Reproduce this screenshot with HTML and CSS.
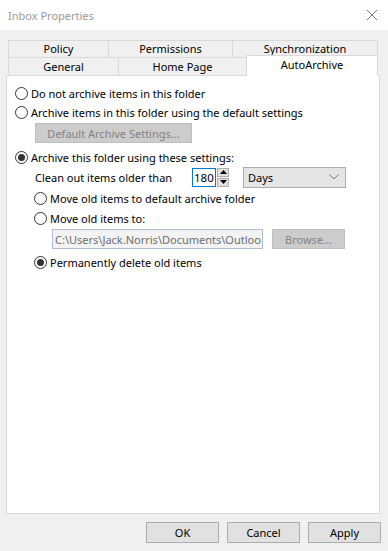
FILE: index.html
```html
<!DOCTYPE html>
<html>
<head>
<meta charset="utf-8">
<link rel="stylesheet" href="styles.css">
</head>
<body>
<div class="window">
  <div class="titlebar">
    <span class="title">Inbox Properties</span>
    <svg class="close" width="12" height="12" viewBox="0 0 12 12"><path d="M1 1 L11 11 M11 1 L1 11" stroke="#7a7a7a" stroke-width="1" fill="none"/></svg>
  </div>
  <div class="client">
    <div class="tabs">
      <div class="tabrow">
        <div class="tab w-policy">Policy</div>
        <div class="tab w-perm">Permissions</div>
        <div class="tab w-sync last">Synchronization</div>
      </div>
      <div class="tabrow">
        <div class="tab low w-general">General</div>
        <div class="tab low w-home">Home Page</div>
        <div class="tab low w-auto last selected">AutoArchive</div>
      </div>
    </div>
    <div class="panel">
      <div class="row r1"><span class="radio"></span><span>Do not archive items in this folder</span></div>
      <div class="row r2"><span class="radio"></span><span>Archive items in this folder using the default settings</span></div>
      <div class="btnrow"><div class="btn disabled wide">Default Archive Settings...</div></div>
      <div class="row r3"><span class="radio on"></span><span>Archive this folder using these settings:</span></div>
      <div class="cleanrow">
        <span class="cleanlabel">Clean out items older than</span>
        <div class="spin">
          <div class="spininput">180</div>
          <div class="spinbtns">
            <div class="spinbtn"><svg width="7" height="4" viewBox="0 0 7 4"><path d="M0 4 L3.5 0 L7 4 Z" fill="#000"/></svg></div>
            <div class="spinbtn"><svg width="7" height="4" viewBox="0 0 7 4"><path d="M0 0 L3.5 4 L7 0 Z" fill="#000"/></svg></div>
          </div>
        </div>
        <div class="select"><span>Days</span><svg width="10" height="6" viewBox="0 0 10 6"><path d="M0.5 0.5 L5 5 L9.5 0.5" stroke="#777" stroke-width="1" fill="none"/></svg></div>
      </div>
      <div class="row sub r4"><span class="radio"></span><span>Move old items to default archive folder</span></div>
      <div class="row sub r5"><span class="radio"></span><span>Move old items to:</span></div>
      <div class="pathrow">
        <div class="pathinput"><span>C:\Users\Jack.Norris\Documents\Outloo</span></div>
        <div class="btn disabled browse">Browse...</div>
      </div>
      <div class="row sub r6"><span class="radio on"></span><span>Permanently delete old items</span></div>
    </div>
    <div class="footer">
      <div class="btn">OK</div>
      <div class="btn">Cancel</div>
      <div class="btn">Apply</div>
    </div>
  </div>
</div>
</body>
</html>
```
FILE: styles.css
```css
* { box-sizing: border-box; }
html, body { margin: 0; padding: 0; }
body {
  width: 388px;
  height: 551px;
  background: #f0f0f0;
  font-family: "Noto Sans", "Open Sans", sans-serif;
  font-size: 11px;
  color: #000;
  overflow: hidden;
}
.window { width: 388px; height: 551px; display: flex; flex-direction: column; }
.titlebar {
  height: 30px;
  background: #fff;
  display: flex;
  align-items: center;
  justify-content: space-between;
  padding: 0 10px 0 8px;
}
.title { color: #9a9a9a; font-size: 11px; }
.client { flex: 1; display: flex; flex-direction: column; }
.tabs { margin: 10px 0 0 8px; width: 370px; position: relative; z-index: 2; }
.tabrow { display: flex; height: 17px; }
.tabrow + .tabrow { height: 18px; }
.tab {
  height: 17px;
  border-top: 1px solid #d9d9d9;
  border-left: 1px solid #d9d9d9;
  background: #f0f0f0;
  display: flex;
  align-items: center;
  justify-content: center;
  line-height: 16px;
}
.tab.low { height: 18px; }
.tab.last { border-right: 1px solid #d9d9d9; }
.w-policy { width: 100px; }
.w-perm { width: 124px; }
.w-sync { width: 146px; }
.w-general { width: 110px; }
.w-home { width: 128px; }
.w-auto { width: 132px; }
.tab.selected {
  background: #fff;
  height: 21px;
  margin-top: -2px;
  align-items: flex-start;
  padding-top: 1px;
}
.panel {
  margin-left: 6px;
  width: 374px;
  height: 439px;
  background: #fff;
  border: 1px solid #d9d9d9;
  position: relative;
  z-index: 1;
  padding-left: 8px;
}
.row { display: flex; align-items: center; height: 20px; white-space: nowrap; }
.row.sub { padding-left: 19px; }
.r1 { margin-top: 7px; }
.r2 { height: 19px; }
.r3 { margin-top: 4px; }
.radio {
  width: 13px;
  height: 13px;
  border: 1px solid #333;
  border-radius: 50%;
  background: #fff;
  margin-right: 3px;
  display: flex;
  align-items: center;
  justify-content: center;
  flex: none;
}
.radio.on::after {
  content: "";
  width: 7px;
  height: 7px;
  border-radius: 50%;
  background: #333;
}
.btnrow { margin-top: 1px; padding-left: 20px; display: flex; }
.btn {
  height: 21px;
  width: 73px;
  border: 1px solid #adadad;
  background: #e1e1e1;
  display: flex;
  align-items: center;
  justify-content: center;
}
.btn.disabled { background: #cccccc; border-color: #bfbfbf; color: #838383; }
.btn.wide { width: 157px; height: 20px; }
.cleanrow { display: flex; align-items: center; height: 22px; margin-top: -1px; padding-left: 20px; }
.cleanlabel { width: 157px; }
.spin { display: flex; align-items: center; }
.spininput {
  width: 24px;
  height: 19px;
  border: 1px solid #0078d7;
  padding-left: 1px;
  display: flex;
  align-items: center;
  font-size: 11.5px;
}
.spinbtns { display: flex; flex-direction: column; margin-left: 1px; gap: 1px; }
.spinbtn {
  width: 12px;
  height: 9px;
  border: 1px solid #adadad;
  background: #e1e1e1;
  display: flex;
  align-items: center;
  justify-content: center;
}
.select {
  margin-left: 14px;
  width: 103px;
  height: 21px;
  border: 1px solid #adadad;
  background: #e5e5e5;
  display: flex;
  align-items: center;
  justify-content: space-between;
  padding: 0 6px 0 4px;
}
.pathrow { display: flex; align-items: center; margin-top: 1px; padding-left: 37px; height: 20px; }
.pathinput {
  width: 211px;
  height: 20px;
  border: 1px solid #aebcd6;
  background: #f3f3f3;
  color: #6d6d6d;
  white-space: nowrap;
  overflow: hidden;
  padding-left: 2px;
  display: flex;
  align-items: center;
}
.browse { margin-left: 9px; width: 73px; height: 20px; }
.r6 { margin-top: 3px; }
.footer { display: flex; justify-content: flex-end; gap: 8px; padding-right: 7px; margin-top: 8px; }
```
